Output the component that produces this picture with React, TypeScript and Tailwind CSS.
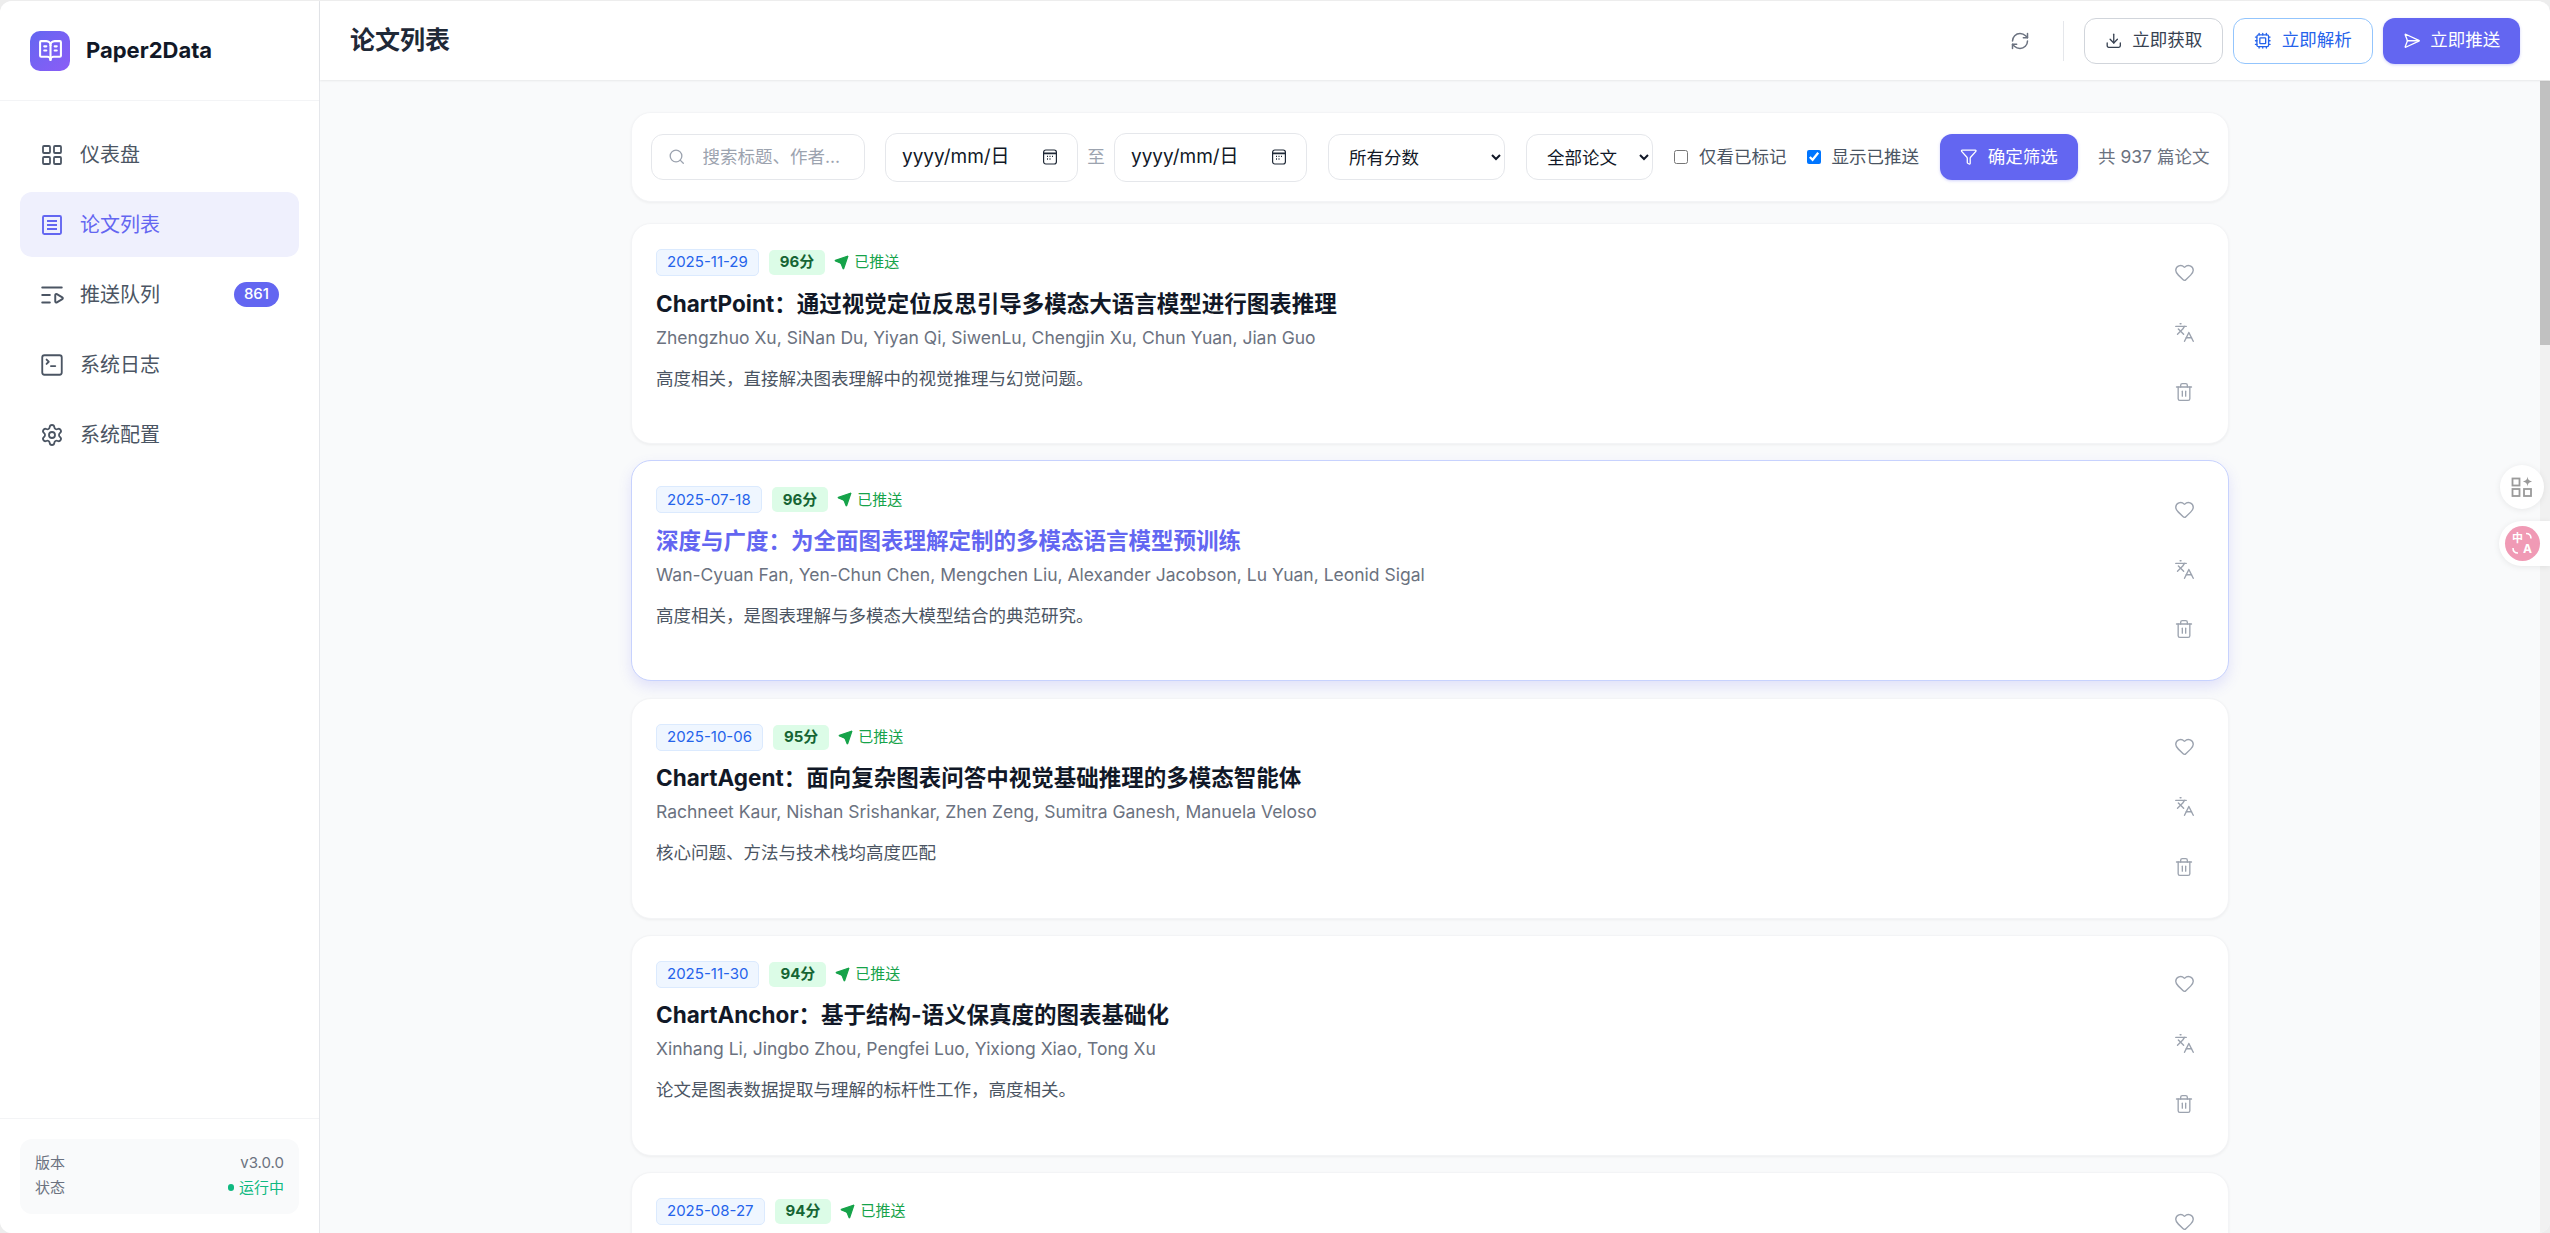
import React from 'react';
import {
  BookOpenText,
  Cpu,
  Download,
  Filter,
  Heart,
  Languages,
  LayoutGrid,
  ListVideo,
  RefreshCw,
  Search,
  Send,
  SendHorizontal,
  Settings,
  SquareTerminal,
  Trash2,
} from 'lucide-react';

const papers = [
  {
    date: '2025-11-29',
    score: '96分',
    title: 'ChartPoint：通过视觉定位反思引导多模态大语言模型进行图表推理',
    authors: 'Zhengzhuo Xu, SiNan Du, Yiyan Qi, SiwenLu, Chengjin Xu, Chun Yuan, Jian Guo',
    summary: '高度相关，直接解决图表理解中的视觉推理与幻觉问题。',
  },
  {
    date: '2025-07-18',
    score: '96分',
    title: '深度与广度：为全面图表理解定制的多模态语言模型预训练',
    authors: 'Wan-Cyuan Fan, Yen-Chun Chen, Mengchen Liu, Alexander Jacobson, Lu Yuan, Leonid Sigal',
    summary: '高度相关，是图表理解与多模态大模型结合的典范研究。',
    hovered: true,
  },
  {
    date: '2025-10-06',
    score: '95分',
    title: 'ChartAgent：面向复杂图表问答中视觉基础推理的多模态智能体',
    authors: 'Rachneet Kaur, Nishan Srishankar, Zhen Zeng, Sumitra Ganesh, Manuela Veloso',
    summary: '核心问题、方法与技术栈均高度匹配',
  },
  {
    date: '2025-11-30',
    score: '94分',
    title: 'ChartAnchor：基于结构-语义保真度的图表基础化',
    authors: 'Xinhang Li, Jingbo Zhou, Pengfei Luo, Yixiong Xiao, Tong Xu',
    summary: '论文是图表数据提取与理解的标杆性工作，高度相关。',
  },
  {
    date: '2025-08-27',
    score: '94分',
    title: '',
    authors: '',
    summary: '',
  },
];

function DocIcon() {
  return (
    <svg className="w-[24px] h-[24px] shrink-0" viewBox="0 0 24 24" fill="none" stroke="currentColor" strokeWidth={1.9}>
      <rect x="3" y="3" width="18" height="18" rx="1.2" />
      <path d="M7 8h10M7 12h10M7 16h10" />
    </svg>
  );
}

function CalendarGlyph() {
  return (
    <svg className="w-[16px] h-[18px] text-[#1f2937]" viewBox="0 0 16 18" fill="none" stroke="currentColor" strokeWidth={1.2}>
      <rect x="1.6" y="2" width="12.8" height="14" rx="2.2" />
      <path d="M1.6 5.4h12.8" strokeWidth={1.8} />
      <path d="M5 8.4h1M7.5 8.4h1M10 8.4h1M5 11h1M7.5 11h1" strokeWidth={1.3} />
    </svg>
  );
}

function NavItem({ icon, label, active, badge }: { icon: React.ReactNode; label: string; active?: boolean; badge?: string }) {
  return (
    <div className={`h-[65px] rounded-[12px] pl-[22px] pr-[20px] flex items-center gap-[18px] text-[20px] ${active ? 'bg-[#eff0fd] text-[#6366f1]' : 'text-[#4b5563]'}`}>
      <span className="w-[20px] flex justify-center">{icon}</span>
      <span className="flex-1">{label}</span>
      {badge && <span className="h-[25px] px-[10px] rounded-full bg-[#6366f1] text-white text-[15px] font-medium flex items-center">{badge}</span>}
    </div>
  );
}

function DateBox() {
  return (
    <div className="w-[193px] h-[49px] shrink-0 rounded-[12px] border border-[#e5e7eb] pl-[16px] pr-[19px] flex items-center justify-between text-[19px] text-[#111827]">
      <span>yyyy/mm/日</span>
      <CalendarGlyph />
    </div>
  );
}

function PaperCard({ paper }: { paper: (typeof papers)[0] }) {
  return (
    <div className={`h-[221px] shrink-0 rounded-[20px] bg-white border flex justify-between pl-[24px] pr-[21px] pt-[25px] ${paper.hovered ? 'border-[#c7d2fe] shadow-[0_6px_14px_rgba(99,102,241,0.16)]' : 'border-[#f3f4f6] shadow-[0_1px_3px_rgba(0,0,0,0.05)]'}`}>
      <div className="min-w-0">
        <div className="h-[27px] flex items-center text-[15px]">
          <span className="h-[27px] px-[10px] rounded-[5px] bg-[#eff6ff] border border-[#dbeafe] text-[#2563eb] flex items-center">{paper.date}</span>
          <span className="h-[25px] ml-[10px] px-[11px] rounded-[5px] bg-[#dcfce7] text-[#166534] font-bold flex items-center">{paper.score}</span>
          <Send className="ml-[9px] w-[15px] h-[15px] text-[#16a34a] fill-[#16a34a]" strokeWidth={2} />
          <span className="ml-[5px] text-[#16a34a]">已推送</span>
        </div>
        <h3 className={`mt-[11.5px] text-[22.5px] leading-[31px] font-bold ${paper.hovered ? 'text-[#6366f1]' : 'text-[#111827]'}`}>{paper.title}</h3>
        <p className="mt-[6px] text-[17.5px] leading-[25px] text-[#6b7280]">{paper.authors}</p>
        <p className="mt-[16px] text-[17.5px] leading-[25px] text-[#4b5563]">{paper.summary}</p>
      </div>
      <div className="mt-[13px] mr-[13px] w-[20px] flex flex-col gap-[40px] text-[#9ca3af] shrink-0 items-center">
        <span className="h-[20px] flex items-center"><Heart className="w-[21px] h-[21px] shrink-0" strokeWidth={1.6} /></span>
        <span className="h-[20px] flex items-center"><Languages className="w-[21px] h-[21px] shrink-0" strokeWidth={1.6} /></span>
        <span className="h-[20px] flex items-center"><Trash2 className="w-[20px] h-[20px] shrink-0" strokeWidth={1.6} /></span>
      </div>
    </div>
  );
}

export default function App() {
  return (
    <div className="h-screen bg-[#ededed] pt-px overflow-hidden relative font-['Inter','Noto_Sans_CJK_SC',sans-serif]">
      <div className="h-full rounded-[12px] overflow-hidden flex bg-[#f9fafb]">
        {/* sidebar */}
        <aside className="w-[320px] shrink-0 bg-white border-r border-[#e5e7eb] flex flex-col">
          <div className="h-[100px] shrink-0 border-b border-[#f3f4f6] pl-[30px] flex items-center gap-[16px]">
            <div className="w-[40px] h-[40px] rounded-[10px] bg-gradient-to-br from-[#6366f1] to-[#8b5cf6] flex items-center justify-center">
              <BookOpenText className="w-[25px] h-[25px] text-white" strokeWidth={2} />
            </div>
            <span className="text-[22px] font-bold text-[#111827]">Paper2Data</span>
          </div>
          <nav className="flex-1 pt-[21px] px-[20px] flex flex-col gap-[5px]">
            <NavItem icon={<LayoutGrid className="w-[24px] h-[24px] shrink-0" strokeWidth={1.8} />} label="仪表盘" />
            <NavItem active icon={<DocIcon />} label="论文列表" />
            <NavItem badge="861" icon={<ListVideo className="w-[26px] h-[26px] shrink-0" strokeWidth={1.8} />} label="推送队列" />
            <NavItem icon={<SquareTerminal className="w-[26px] h-[26px] shrink-0" strokeWidth={1.7} />} label="系统日志" />
            <NavItem icon={<Settings className="w-[24px] h-[24px] shrink-0" strokeWidth={1.8} />} label="系统配置" />
          </nav>
          <div className="h-[115px] shrink-0 border-t border-[#f3f4f6] px-[20px] pt-[20px]">
            <div className="h-[75px] rounded-[12px] bg-[#f9fafb] px-[15px] pt-[11px] text-[15px] leading-[25px] text-[#6b7280]">
              <div className="flex justify-between"><span>版本</span><span>v3.0.0</span></div>
              <div className="flex justify-between">
                <span>状态</span>
                <span className="flex items-center gap-[5px] text-[#10b981]">
                  <i className="w-[6px] h-[7px] rounded-full bg-[#10b981]" />运行中
                </span>
              </div>
            </div>
          </div>
        </aside>

        <div className="flex-1 min-w-0 flex flex-col">
          {/* top bar */}
          <header className="h-[79px] shrink-0 bg-white shadow-[0_1px_2px_rgba(0,0,0,0.07)] relative pl-[30px] pr-[30px] flex items-center">
            <h1 className="flex-1 text-[25px] font-bold text-[#1f2937]">论文列表</h1>
            <RefreshCw className="w-[20px] h-[20px] text-[#6b7280] mr-[33px]" strokeWidth={1.8} />
            <div className="w-px h-[40px] bg-[#e5e7eb] mr-[20px]" />
            <div className="flex gap-[10px] text-[17.5px]">
              <button className="w-[139px] h-[46px] rounded-[12px] border border-[#d1d5db] bg-white text-[#374151] flex items-center justify-center gap-[10px]">
                <Download className="w-[17.5px] h-[17.5px]" strokeWidth={1.8} />立即获取
              </button>
              <button className="w-[140px] h-[46px] rounded-[12px] border border-[#93c5fd] bg-white text-[#2563eb] flex items-center justify-center gap-[10px]">
                <Cpu className="w-[17.5px] h-[17.5px]" strokeWidth={1.8} />立即解析
              </button>
              <button className="w-[137px] h-[46px] rounded-[12px] bg-[#6366f1] text-white shadow-[0_1px_3px_rgba(99,102,241,0.3)] flex items-center justify-center gap-[10px]">
                <SendHorizontal className="w-[17.5px] h-[17.5px]" strokeWidth={1.8} />立即推送
              </button>
            </div>
          </header>

          <div className="flex-1 min-h-0 flex">
            <main className="flex-1 min-w-0 overflow-hidden pt-[32px]">
              <div className="w-[1598px] mx-auto flex flex-col">
                {/* filters */}
                <div className="h-[90px] rounded-[20px] bg-white border border-[#f3f4f6] shadow-[0_1px_3px_rgba(0,0,0,0.05)] pl-[19px] mb-[21px] flex items-center text-[17.5px]">
                  <div className="w-[214px] h-[46px] shrink-0 rounded-[12px] border border-[#e5e7eb] pl-[16px] flex items-center gap-[17px] mr-[20px]">
                    <Search className="w-[17.5px] h-[17.5px] text-[#9ca3af] shrink-0" strokeWidth={1.8} />
                    <input className="w-[150px] outline-none placeholder:text-[#9ca3af]" placeholder="搜索标题、作者..." />
                  </div>
                  <DateBox />
                  <span className="w-[36px] text-center text-[#9ca3af]">至</span>
                  <DateBox />
                  <select className="w-[177px] h-[46px] shrink-0 ml-[21px] rounded-[12px] border border-[#e5e7eb] bg-white pl-[16px] pr-[5px] text-[#111827]">
                    <option>所有分数</option>
                  </select>
                  <select className="w-[127px] h-[46px] shrink-0 ml-[21px] rounded-[12px] border border-[#e5e7eb] bg-white pl-[16px] pr-[5px] text-[#111827]">
                    <option>全部论文</option>
                  </select>
                  <label className="ml-[21px] flex items-center gap-[11px] text-[#4b5563]">
                    <input type="checkbox" className="w-[14px] h-[14px]" />仅看已标记
                  </label>
                  <label className="ml-[20px] flex items-center gap-[11px] text-[#4b5563]">
                    <input type="checkbox" defaultChecked className="w-[14px] h-[14px]" />显示已推送
                  </label>
                  <button className="ml-[21px] w-[138px] h-[46px] rounded-[12px] bg-[#6366f1] text-white shadow-[0_1px_3px_rgba(99,102,241,0.3)] flex items-center justify-center gap-[10px]">
                    <Filter className="w-[17.5px] h-[17.5px]" strokeWidth={1.8} />确定筛选
                  </button>
                  <span className="ml-[20px] text-[#6b7280]">共 937 篇论文</span>
                </div>
                {/* paper list */}
                <div className="flex flex-col gap-[16.25px]">
                  {papers.map((p) => (
                    <PaperCard key={p.date} paper={p} />
                  ))}
                </div>
              </div>
            </main>
            {/* page scrollbar */}
            <div className="w-[10px] shrink-0 bg-[#f1f1f1]">
              <div className="h-[264px] mt-px bg-[#c1c1c1]" />
            </div>
          </div>
        </div>
      </div>

      {/* browser extension widgets */}
      <div className="absolute left-[2500px] top-[465px] w-[44px] h-[44px] rounded-full bg-white shadow-[0_1px_6px_rgba(0,0,0,0.08)] flex items-center justify-center">
        <svg className="w-[22px] h-[22px] text-[#9a9a9a]" viewBox="0 0 22 22" fill="none" stroke="currentColor" strokeWidth={1.8}>
          <rect x="1.5" y="2.5" width="7" height="7" />
          <rect x="1.5" y="13" width="7" height="7" />
          <rect x="13" y="13" width="7" height="7" />
          <path d="M16.5 0.5c.4 3 1.2 4 4.5 5-3.3 1-4.1 2-4.5 5-.4-3-1.2-4-4.5-5 3.3-1 4.1-2 4.5-5z" fill="currentColor" stroke="none" />
        </svg>
      </div>
      <div className="absolute left-[2499px] top-[521px] w-[51px] h-[45px] rounded-l-full bg-white shadow-[0_1px_6px_rgba(0,0,0,0.08)] pl-[6px] flex items-center">
        <div className="w-[35px] h-[35px] rounded-full bg-[#f09ab5] relative text-white font-bold">
          <span className="absolute left-[7px] top-[7px] text-[11px] leading-[11px]">中</span>
          <span className="absolute left-[18px] top-[17px] text-[12px] leading-[12px]">A</span>
          <svg className="absolute inset-0 w-[35px] h-[35px]" viewBox="0 0 35 35" fill="none" stroke="white" strokeWidth={1.6}>
            <path d="M21 7.5c3 0 5 1.5 5 5" />
            <path d="M8 22c0 3 2 5 5 5" />
          </svg>
        </div>
      </div>
    </div>
  );
}
